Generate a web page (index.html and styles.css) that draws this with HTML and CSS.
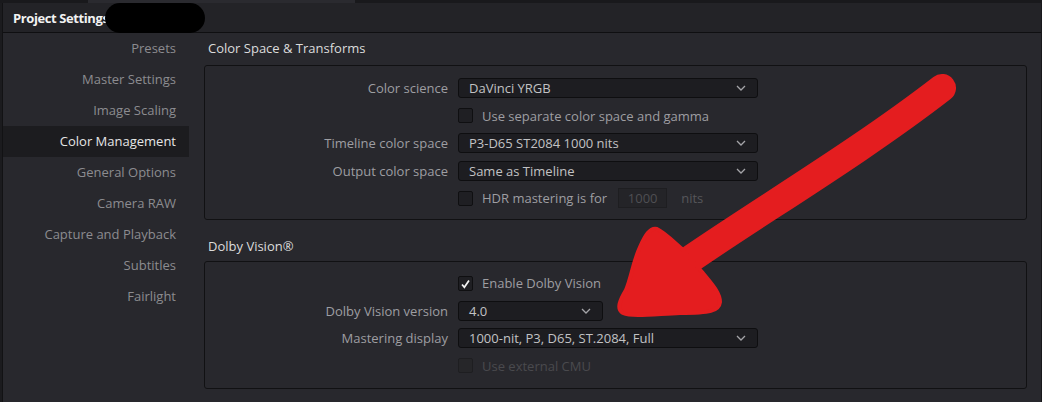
FILE: index.html
```html
<!DOCTYPE html>
<html lang="en">
<head>
    <meta charset="UTF-8">
    <title>Project Settings</title>
    <link rel="stylesheet" href="styles.css">
</head>
<body>
    <div class="top-strip">
        <span class="strip-tab"></span>
    </div>

    <div class="window">
        <div class="titlebar">
            <span class="title">Project Settings</span>
            <span class="redact"></span>
        </div>

        <div class="content">
            <nav class="sidebar">
                <div class="nav-item">Presets</div>
                <div class="nav-item">Master Settings</div>
                <div class="nav-item">Image Scaling</div>
                <div class="nav-item active">Color Management</div>
                <div class="nav-item">General Options</div>
                <div class="nav-item">Camera RAW</div>
                <div class="nav-item">Capture and Playback</div>
                <div class="nav-item">Subtitles</div>
                <div class="nav-item">Fairlight</div>
            </nav>

            <main class="panel">
                <h2 class="section-title">Color Space &amp; Transforms</h2>
                <div class="group group-color">
                    <span class="row-label">Color science</span>
                    <div class="select wide">
                        <span>DaVinci YRGB</span>
                        <svg class="chevron" viewBox="0 0 10 6"><polyline points="1,1 5,5 9,1"/></svg>
                    </div>

                    <span class="row-label"></span>
                    <div class="check-row">
                        <span class="checkbox"></span>
                        <span class="check-label">Use separate color space and gamma</span>
                    </div>

                    <span class="row-label">Timeline color space</span>
                    <div class="select wide">
                        <span>P3-D65 ST2084 1000 nits</span>
                        <svg class="chevron" viewBox="0 0 10 6"><polyline points="1,1 5,5 9,1"/></svg>
                    </div>

                    <span class="row-label">Output color space</span>
                    <div class="select wide">
                        <span>Same as Timeline</span>
                        <svg class="chevron" viewBox="0 0 10 6"><polyline points="1,1 5,5 9,1"/></svg>
                    </div>

                    <span class="row-label"></span>
                    <div class="check-row">
                        <span class="checkbox"></span>
                        <span class="check-label">HDR mastering is for</span>
                        <span class="num-input">1000</span>
                        <span class="unit">nits</span>
                    </div>
                </div>

                <h2 class="section-title lower">Dolby Vision®</h2>
                <div class="group group-dolby">
                    <span class="row-label"></span>
                    <div class="check-row">
                        <span class="checkbox checked">
                            <svg viewBox="0 0 15 15"><polyline points="3.5,7.5 6.2,10.8 11.5,3"/></svg>
                        </span>
                        <span class="check-label">Enable Dolby Vision</span>
                    </div>

                    <span class="row-label">Dolby Vision version</span>
                    <div class="select narrow">
                        <span>4.0</span>
                        <svg class="chevron" viewBox="0 0 10 6"><polyline points="1,1 5,5 9,1"/></svg>
                    </div>

                    <span class="row-label">Mastering display</span>
                    <div class="select wide">
                        <span>1000-nit, P3, D65, ST.2084, Full</span>
                        <svg class="chevron" viewBox="0 0 10 6"><polyline points="1,1 5,5 9,1"/></svg>
                    </div>

                    <span class="row-label"></span>
                    <div class="check-row disabled">
                        <span class="checkbox"></span>
                        <span class="check-label">Use external CMU</span>
                    </div>
                </div>
            </main>
        </div>
    </div>

    <!-- hand-drawn pointer on top of the settings -->
    <svg class="markup" viewBox="0 0 1042 402">
        <path class="markup-shaft" d="M 692 258 C 765 208, 862 150, 942 88"/>
        <path class="markup-head" d="M 657 229 C 664 232, 674 242, 682 249 L 702 272 C 710 282, 720 292, 720 302 C 719 311, 710 313, 680 313 C 655 314, 632 317, 623 313 C 616 309, 620 300, 626 290 C 631 279, 633 262, 640 247 C 645 236, 650 227, 657 229 Z"/>
    </svg>
</body>
</html>
```

FILE: styles.css
```css
body {
    margin: 0;
    background-color: #1b1b1e;
    font-family: "Open Sans", "Noto Sans", sans-serif;
    font-size: 13px;
    height: 100vh;
    overflow: hidden;
    position: relative;
}
.top-strip {
    height: 3px;
    background-color: #19191c;
    display: flex;
}
.strip-tab {
    margin-left: 88px;
    width: 267px;
    background-color: #2a2a2f;
}
.window {
    margin-left: 2px;
    height: calc(100vh - 3px);
    display: flex;
    flex-direction: column;
    border-left: 1px solid #121214;
    border-right: 1px solid #18181b;
}
.titlebar {
    position: relative;
    height: 29px;
    border-bottom: 1px solid #0f0f11;
    background-color: #232327;
    display: flex;
    align-items: center;
    padding-left: 10px;
}
.title {
    color: #f2f2f2;
    font-weight: 700;
    font-size: 13px;
    letter-spacing: -0.4px;
}
.redact {
    position: absolute;
    left: 102px;
    top: 0;
    width: 100px;
    height: 30px;
    background-color: #000;
    border-radius: 15px;
}
.content {
    flex: 1;
    display: flex;
    background-color: #28282d;
}
.sidebar {
    width: 186px;
    display: flex;
    flex-direction: column;
}
.nav-item {
    height: 31px;
    line-height: 31px;
    text-align: right;
    padding-right: 13px;
    color: #8c8c90;
}
.nav-item.active {
    background-color: #1c1c1f;
    color: #e6e6e6;
}
.panel {
    flex: 1;
    padding: 0 14px 0 15px;
}
.section-title {
    margin: 0;
    height: 32px;
    line-height: 30px;
    padding-left: 4px;
    font-size: 13px;
    font-weight: 400;
    color: #dcdcdc;
}
.section-title.lower {
    line-height: 35px;
}
.group {
    border: 1px solid #111113;
    border-radius: 3px;
    display: grid;
    grid-template-columns: 243px 1fr;
    grid-auto-rows: 20px;
    column-gap: 10px;
    row-gap: 7.5px;
    align-items: center;
}
.group-color {
    padding: 12px 0 11px;
    margin-bottom: 9px;
}
.group-dolby {
    padding: 11px 0 12px;
}
.row-label {
    text-align: right;
    color: #9e9ea2;
}
.select {
    height: 18px;
    display: flex;
    align-items: center;
    justify-content: space-between;
    padding: 0 11px 0 10px;
    background-color: #1d1d21;
    border: 1px solid #0e0e10;
    border-radius: 3px;
    color: #c2c2c4;
}
.select.wide {
    width: 277px;
}
.select.narrow {
    width: 122px;
}
.chevron {
    width: 10px;
    height: 6px;
    fill: none;
    stroke: #a4a4a8;
    stroke-width: 1.3;
}
.check-row {
    display: flex;
    align-items: center;
    color: #9e9ea2;
}
.checkbox {
    width: 13px;
    height: 13px;
    background-color: #1f1f23;
    border: 1px solid #0f0f11;
    border-radius: 2px;
    margin-right: 9px;
}
.checkbox svg {
    width: 13px;
    height: 13px;
    fill: none;
    stroke: #f4f4f4;
    stroke-width: 2;
}
.num-input {
    width: 47px;
    height: 18px;
    line-height: 18px;
    margin-left: 11px;
    text-align: center;
    background-color: #242428;
    border: 1px solid #1e1e21;
    color: #4f4f53;
}
.unit {
    margin-left: 14px;
    color: #56565a;
}
.check-row.disabled {
    color: #4a4a4e;
}
.check-row.disabled .checkbox {
    background-color: #262629;
    border-color: #1e1e21;
}
.markup {
    position: absolute;
    left: 0;
    top: 0;
    width: 1042px;
    height: 402px;
    pointer-events: none;
}
.markup-shaft {
    fill: none;
    stroke: #e41d1f;
    stroke-width: 28;
    stroke-linecap: round;
}
.markup-head {
    fill: #e41d1f;
    stroke: #e41d1f;
    stroke-width: 4;
    stroke-linejoin: round;
}
```
